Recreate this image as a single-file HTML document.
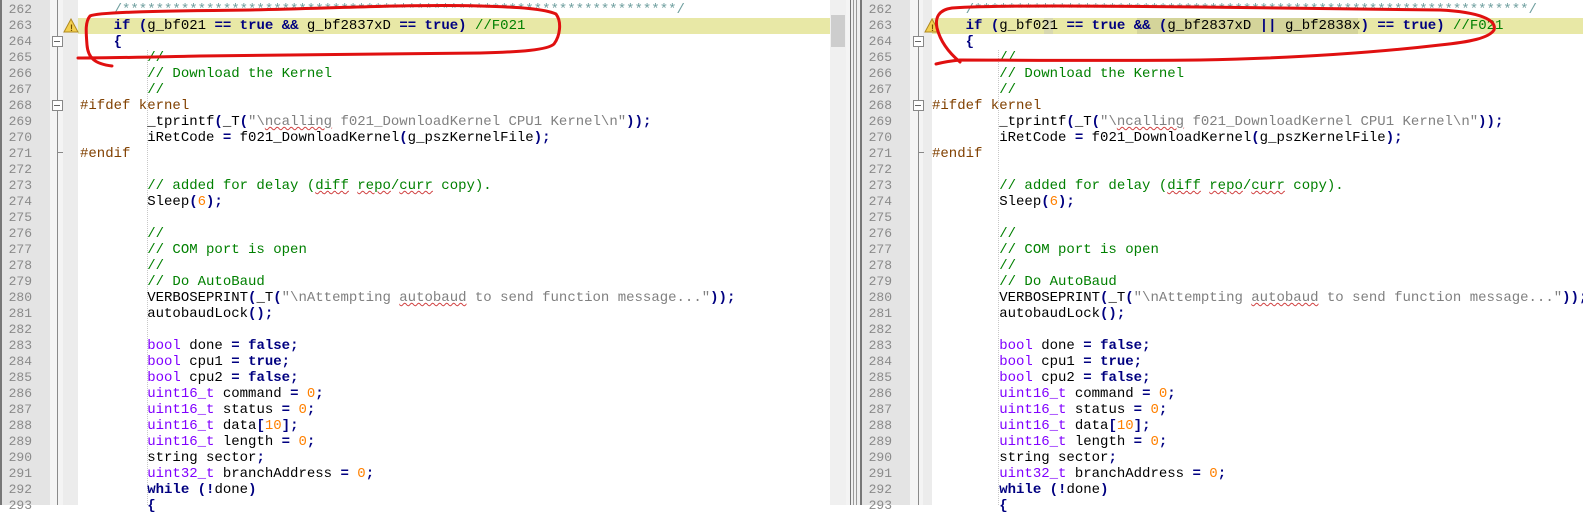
<!DOCTYPE html>
<html><head><meta charset="utf-8"><style>
body{margin:0;width:1583px;height:505px;overflow:hidden;background:#fff;position:relative;font-family:"Liberation Mono",monospace}
.abs{position:absolute}
.code{position:absolute;top:2px;margin:0;font:14px/16px "Liberation Mono",monospace;color:#000;white-space:pre}
.ln{position:absolute;top:2px;margin:0;font:13px/16px "Liberation Mono",monospace;color:#8a8a8a;white-space:pre;text-align:right}
.k{color:#000080;font-weight:bold}
.o{color:#000080;font-weight:bold}
.t{color:#8000ff}
.n{color:#ff8000}
.c{color:#008000}
.cs{color:#6f9f9f}
.p{color:#804000}
.s{color:#808080}
.sq{text-decoration:underline wavy #d04040;text-decoration-thickness:1px}
</style></head><body>
<!-- LEFT PANE -->
<div class="abs" style="left:0;top:0;width:2px;height:505px;background:#777"></div>
<div class="abs" style="left:2px;top:0;width:48px;height:505px;background:#e4e4e4"></div>
<div class="abs" style="left:50px;top:0;width:13px;height:505px;background:#f4f4f4"></div>
<div class="abs" style="left:57px;top:0;width:1px;height:505px;background:#8a8a8a"></div>
<div class="abs" style="left:63px;top:0;width:15px;height:505px;background:#ececec"></div>
<div class="abs" style="left:78px;top:18px;width:752px;height:16px;background:#e8e8a6"></div>
<div class="abs" style="left:147px;top:50px;height:455px;border-left:1px dotted #c8c8c8"></div>
<div class="abs" style="left:52px;top:36px;width:9px;height:9px;border:1px solid #888;background:#fff"></div>
<div class="abs" style="left:54px;top:41px;width:6px;height:1px;background:#666"></div>
<div class="abs" style="left:52px;top:100px;width:9px;height:9px;border:1px solid #888;background:#fff"></div>
<div class="abs" style="left:54px;top:105px;width:6px;height:1px;background:#666"></div>
<div class="abs" style="left:57px;top:152px;width:6px;height:1px;background:#888"></div>
<svg class="abs" style="left:63px;top:18px" width="16" height="15"><polygon points="8,1 15,14 1,14" fill="#f4d050" stroke="#b08a20"/><text x="7" y="13" font-size="9" font-family="Liberation Sans" font-weight="bold" fill="#705000">!</text></svg>
<pre class="ln" style="left:4px;width:28px">262
263
264
265
266
267
268
269
270
271
272
273
274
275
276
277
278
279
280
281
282
283
284
285
286
287
288
289
290
291
292
293</pre>
<pre class="code" style="left:80px"><span class="cs">    /******************************************************************/</span>
    <span class="k">if</span> <span class="o">(</span>g_bf021 <span class="o">==</span> <span class="k">true</span> <span class="o">&amp;&amp;</span> g_bf2837xD <span class="o">==</span> <span class="k">true</span><span class="o">)</span> <span class="c">//F021</span>
    <span class="o">{</span>
        <span class="c">//</span>
        <span class="c">// Download the Kernel</span>
        <span class="c">//</span>
<span class="p">#ifdef kernel</span>
        _tprintf<span class="o">(</span>_T<span class="o">(</span><span class="s">"\<span class="sq">ncalling</span> f021_DownloadKernel CPU1 Kernel\n"</span><span class="o">));</span>
        iRetCode <span class="o">=</span> f021_DownloadKernel<span class="o">(</span>g_pszKernelFile<span class="o">);</span>
<span class="p">#endif</span>

        <span class="c">// added for delay (<span class="sq">diff</span> <span class="sq">repo</span>/<span class="sq">curr</span> copy).</span>
        Sleep<span class="o">(</span><span class="n">6</span><span class="o">);</span>

        <span class="c">//</span>
        <span class="c">// COM port is open</span>
        <span class="c">//</span>
        <span class="c">// Do AutoBaud</span>
        VERBOSEPRINT<span class="o">(</span>_T<span class="o">(</span><span class="s">"\nAttempting <span class="sq">autobaud</span> to send function message..."</span><span class="o">));</span>
        autobaudLock<span class="o">();</span>

        <span class="t">bool</span> done <span class="o">=</span> <span class="k">false</span><span class="o">;</span>
        <span class="t">bool</span> cpu1 <span class="o">=</span> <span class="k">true</span><span class="o">;</span>
        <span class="t">bool</span> cpu2 <span class="o">=</span> <span class="k">false</span><span class="o">;</span>
        <span class="t">uint16_t</span> command <span class="o">=</span> <span class="n">0</span><span class="o">;</span>
        <span class="t">uint16_t</span> status <span class="o">=</span> <span class="n">0</span><span class="o">;</span>
        <span class="t">uint16_t</span> data<span class="o">[</span><span class="n">10</span><span class="o">];</span>
        <span class="t">uint16_t</span> length <span class="o">=</span> <span class="n">0</span><span class="o">;</span>
        string sector<span class="o">;</span>
        <span class="t">uint32_t</span> branchAddress <span class="o">=</span> <span class="n">0</span><span class="o">;</span>
        <span class="k">while</span> <span class="o">(!</span>done<span class="o">)</span>
        <span class="o">{</span></pre>
<!-- left scrollbar -->
<div class="abs" style="left:830px;top:0;width:16px;height:505px;background:#f0f0f0"></div>
<div class="abs" style="left:831px;top:15px;width:14px;height:32px;background:#cdcdcd"></div>
<!-- divider -->
<div class="abs" style="left:846px;top:0;width:4px;height:505px;background:#f4f4f4"></div>
<div class="abs" style="left:850px;top:0;width:12px;height:505px;background:repeating-linear-gradient(90deg,#777 0 1px,#f0f0f0 1px 3px,#999 3px 4px,#f0f0f0 4px 6px,#999 6px 7px,#f0f0f0 7px 10px,#777 10px 12px)"></div>
<!-- RIGHT PANE -->
<div class="abs" style="left:862px;top:0;width:48px;height:505px;background:#e4e4e4"></div>
<div class="abs" style="left:910px;top:0;width:13px;height:505px;background:#f4f4f4"></div>
<div class="abs" style="left:918px;top:0;width:1px;height:505px;background:#8a8a8a"></div>
<div class="abs" style="left:923px;top:0;width:9px;height:505px;background:#ececec"></div>
<div class="abs" style="left:932px;top:18px;width:651px;height:16px;background:#e8e8a6"></div>
<div class="abs" style="left:1044px;top:18px;width:9px;height:16px;background:#d8d8b0"></div>
<div class="abs" style="left:1137px;top:18px;width:221px;height:16px;background:#d4d49a"></div>
<div class="abs" style="left:998px;top:50px;height:455px;border-left:1px dotted #c8c8c8"></div>
<div class="abs" style="left:913px;top:36px;width:9px;height:9px;border:1px solid #888;background:#fff"></div>
<div class="abs" style="left:915px;top:41px;width:6px;height:1px;background:#666"></div>
<div class="abs" style="left:913px;top:100px;width:9px;height:9px;border:1px solid #888;background:#fff"></div>
<div class="abs" style="left:915px;top:105px;width:6px;height:1px;background:#666"></div>
<div class="abs" style="left:918px;top:152px;width:6px;height:1px;background:#888"></div>
<svg class="abs" style="left:924px;top:18px" width="16" height="15"><polygon points="8,1 15,14 1,14" fill="#f4d050" stroke="#b08a20"/><text x="7" y="13" font-size="9" font-family="Liberation Sans" font-weight="bold" fill="#705000">!</text></svg>
<pre class="ln" style="left:864px;width:28px">262
263
264
265
266
267
268
269
270
271
272
273
274
275
276
277
278
279
280
281
282
283
284
285
286
287
288
289
290
291
292
293</pre>
<pre class="code" style="left:932px"><span class="cs">    /******************************************************************/</span>
    <span class="k">if</span> <span class="o">(</span>g_bf021 <span class="o">==</span> <span class="k">true</span> <span class="o">&amp;&amp;</span> <span class="o">(</span>g_bf2837xD <span class="o">||</span> g_bf2838x<span class="o">)</span> <span class="o">==</span> <span class="k">true</span><span class="o">)</span> <span class="c">//F021</span>
    <span class="o">{</span>
        <span class="c">//</span>
        <span class="c">// Download the Kernel</span>
        <span class="c">//</span>
<span class="p">#ifdef kernel</span>
        _tprintf<span class="o">(</span>_T<span class="o">(</span><span class="s">"\<span class="sq">ncalling</span> f021_DownloadKernel CPU1 Kernel\n"</span><span class="o">));</span>
        iRetCode <span class="o">=</span> f021_DownloadKernel<span class="o">(</span>g_pszKernelFile<span class="o">);</span>
<span class="p">#endif</span>

        <span class="c">// added for delay (<span class="sq">diff</span> <span class="sq">repo</span>/<span class="sq">curr</span> copy).</span>
        Sleep<span class="o">(</span><span class="n">6</span><span class="o">);</span>

        <span class="c">//</span>
        <span class="c">// COM port is open</span>
        <span class="c">//</span>
        <span class="c">// Do AutoBaud</span>
        VERBOSEPRINT<span class="o">(</span>_T<span class="o">(</span><span class="s">"\nAttempting <span class="sq">autobaud</span> to send function message..."</span><span class="o">));</span>
        autobaudLock<span class="o">();</span>

        <span class="t">bool</span> done <span class="o">=</span> <span class="k">false</span><span class="o">;</span>
        <span class="t">bool</span> cpu1 <span class="o">=</span> <span class="k">true</span><span class="o">;</span>
        <span class="t">bool</span> cpu2 <span class="o">=</span> <span class="k">false</span><span class="o">;</span>
        <span class="t">uint16_t</span> command <span class="o">=</span> <span class="n">0</span><span class="o">;</span>
        <span class="t">uint16_t</span> status <span class="o">=</span> <span class="n">0</span><span class="o">;</span>
        <span class="t">uint16_t</span> data<span class="o">[</span><span class="n">10</span><span class="o">];</span>
        <span class="t">uint16_t</span> length <span class="o">=</span> <span class="n">0</span><span class="o">;</span>
        string sector<span class="o">;</span>
        <span class="t">uint32_t</span> branchAddress <span class="o">=</span> <span class="n">0</span><span class="o">;</span>
        <span class="k">while</span> <span class="o">(!</span>done<span class="o">)</span>
        <span class="o">{</span></pre>
<!-- red annotations -->
<svg class="abs" style="left:0;top:0" width="1583" height="505" fill="none" stroke="#e01010" stroke-width="3" stroke-linecap="round" stroke-linejoin="round">
<path d="M112,66 C95,64 88,58 87,45 C86,32 85,22 90,16 C98,12 160,11 250,10 C340,8 420,4 480,6 C520,7 545,9 556,14 C562,22 560,36 554,44 C548,50 520,52 480,53 C400,54 300,55 200,56 C150,57 110,58 78,58"/>
<path d="M960,62 C948,52 940,40 937,28 C935,18 938,10 952,8 C1000,5 1100,6 1200,7 C1300,8 1380,9 1440,10 C1480,12 1497,20 1494,30 C1489,38 1470,42 1440,45 C1380,52 1300,58 1200,60 C1100,61 1000,60 960,60 C950,61 940,63 936,64"/>
</svg>
</body></html>
